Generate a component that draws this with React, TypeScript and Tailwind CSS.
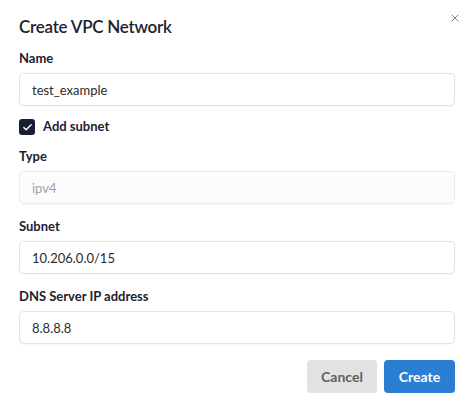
import { X, Check } from 'lucide-react';

const font = { fontFamily: 'Lato, "Noto Sans", sans-serif' };

function Field({ label, value, disabled }: { label: string; value: string; disabled?: boolean }) {
  return (
    <div className="flex flex-col">
      <label className="text-[13px] leading-5 font-bold text-[#1d2230]">{label}</label>
      <input
        readOnly
        disabled={disabled}
        placeholder={disabled ? value : undefined}
        defaultValue={disabled ? undefined : value}
        className={
          'mt-[5px] h-[33px] w-full rounded-[5px] border px-3 text-[13px] outline-none shadow-[0_1px_2px_rgba(0,0,0,0.04)] ' +
          (disabled
            ? 'border-[#ececec] bg-[#fcfcfc] placeholder:text-[#a3a3a3]'
            : 'border-[#e3e3e3] bg-white text-[#2b2b2b]')
        }
        style={font}
      />
    </div>
  );
}

export default function App() {
  return (
    <div className="h-[412px] w-[474px] bg-white px-[19px] pt-[13px] relative" style={font}>
      <button className="absolute right-[13px] top-[12px] text-[#707070]" aria-label="Close">
        <X className="h-[12px] w-[12px]" strokeWidth={1.75} />
      </button>
      <h2 className="text-[17px] leading-7 font-semibold text-[#1d2230] tracking-[-0.25px]">Create VPC Network</h2>

      <div className="mt-[7px]">
        <Field label="Name" value="test_example" />
      </div>

      <div className="mt-[11px] flex h-5 items-center gap-[8px]">
        <span className="flex h-[16px] w-[16px] items-center justify-center rounded-[3px] bg-[#1a1e33]">
          <Check className="h-[11px] w-[11px] text-white" strokeWidth={3} />
        </span>
        <span className="text-[13px] font-bold text-[#1d2230]">Add subnet</span>
      </div>

      <div className="mt-[9px] flex flex-col gap-[12px]">
        <Field label="Type" value="ipv4" disabled />
        <Field label="Subnet" value="10.206.0.0/15" />
        <Field label="DNS Server IP address" value="8.8.8.8" />
      </div>

      <div className="mt-[16px] flex justify-end gap-[7px]">
        <button className="h-[33px] w-[70px] rounded-[4px] bg-[#e2e2e2] text-[14px] font-bold text-[#5f5f5f]">Cancel</button>
        <button className="h-[33px] w-[71px] rounded-[4px] bg-[#2a7fd2] text-[14px] font-bold text-white">Create</button>
      </div>
    </div>
  );
}
